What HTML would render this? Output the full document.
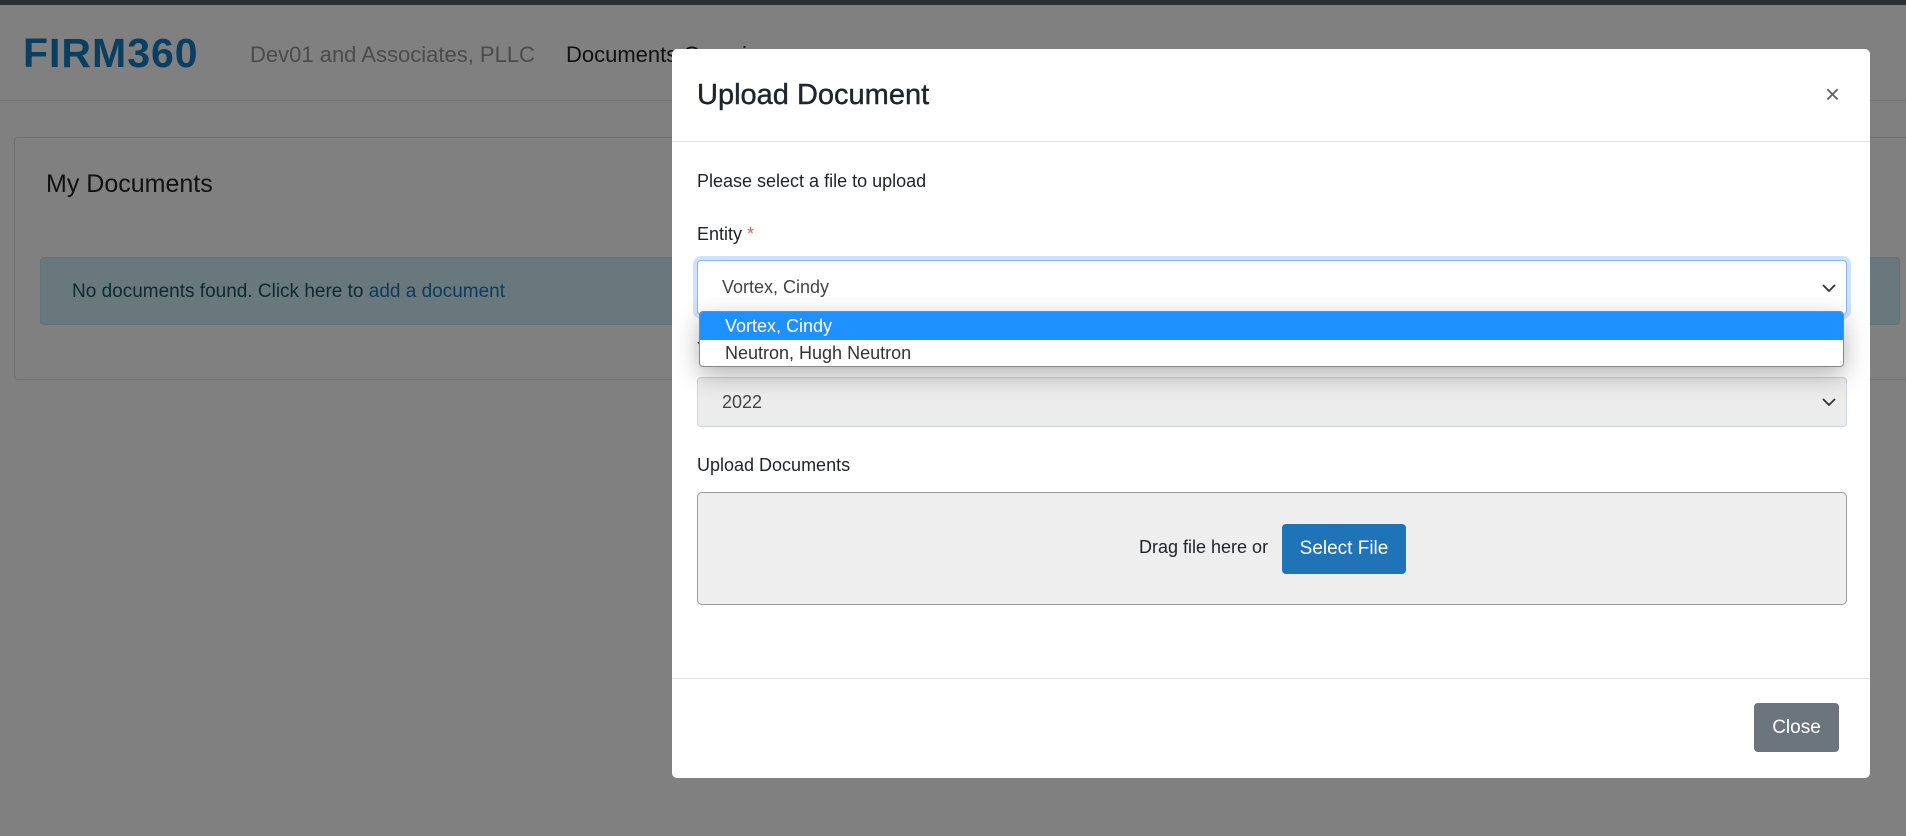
<!DOCTYPE html>
<html><head><meta charset="utf-8"><style>
*{box-sizing:border-box;margin:0;padding:0}
body{width:1906px;height:836px;overflow:hidden;background:#808080;font-family:"Liberation Sans",sans-serif;position:relative;color:#212529}
.abs{position:absolute}
.topbar{left:0;top:0;width:1906px;height:5px;background:#2e2f33}
.nav{left:0;top:5px;width:1906px;height:96px;border-bottom:1px solid #727272}
.logo{left:23px;top:33px;font-size:41px;font-weight:bold;color:#0a3f62;letter-spacing:1px;line-height:40px}
.firm{left:250px;top:42px;font-size:22px;color:#4b4b4b}
.docs{left:566px;top:42px;font-size:22px;color:#111}
.card{left:14px;top:137px;width:1900px;height:243px;border:1px solid #727272;border-radius:4px}
.mydoc{left:46px;top:170px;font-size:25px;color:#111}
.alert{left:40px;top:257px;width:1860px;height:68px;background:#68787c;border:1px solid #62727a;border-radius:4px}
.alert span{position:absolute;left:31px;top:23px;font-size:19px;color:#0e2a30}
.alert a{color:#0f3a5e}
.modal{left:672px;top:49px;width:1198px;height:729px;background:#fff;border-radius:5px}
.mh{left:0;top:0;width:1198px;height:93px;border-bottom:1px solid #dee2e6}
.mh h5{position:absolute;left:25px;top:30px;font-size:29px;font-weight:normal;color:#212529;-webkit-text-stroke:0.4px #212529}
.x{right:30px;top:30px;font-size:26px;color:#666}
.t{font-size:18px;color:#212529}
.sel{border:1px solid #ced4da;border-radius:4px;background:#fff}
.chev{position:absolute;right:10px;top:50%;margin-top:-5px}
.btn{border-radius:4px;color:#fff;font-size:19px;text-align:center}
</style></head><body>
<div class="abs topbar"></div>
<div class="abs nav"></div>
<div class="abs logo">FIRM360</div>
<div class="abs firm">Dev01 and Associates, PLLC</div>
<div class="abs docs">Documents Overview</div>
<div class="abs card"></div>
<div class="abs mydoc">My Documents</div>
<div class="abs alert"><span>No documents found. Click here to <a>add a document</a></span></div>

<div class="abs modal">
 <div class="abs mh"><h5>Upload Document</h5><div class="abs x">×</div></div>
 <div class="abs t" style="left:25px;top:122px">Please select a file to upload</div>
 <div class="abs t" style="left:25px;top:175px">Entity <span style="color:#e55">*</span></div>
 <div class="abs sel" style="left:25px;top:211px;width:1150px;height:55px;border-color:#86b7fe;box-shadow:0 0 0 4px rgba(13,110,253,.2)">
  <span class="abs t" style="left:24px;top:16px;color:#444">Vortex, Cindy</span>
  <svg class="chev" width="14" height="10" viewBox="0 0 14 10"><path d="M1 2l6 6 6-6" fill="none" stroke="#333" stroke-width="1.8"/></svg>
 </div>
 <div class="abs t" style="left:25px;top:290px">Year</div>
 <div class="abs sel" style="left:25px;top:328px;width:1150px;height:50px;background:#ececec">
  <span class="abs t" style="left:24px;top:14px;color:#444">2022</span>
  <svg class="chev" width="14" height="10" viewBox="0 0 14 10"><path d="M1 2l6 6 6-6" fill="none" stroke="#333" stroke-width="1.8"/></svg>
 </div>
 <div class="abs t" style="left:25px;top:406px">Upload Documents</div>
 <div class="abs" style="left:25px;top:443px;width:1150px;height:113px;background:#eee;border:1px solid #9a9a9a;border-radius:5px">
  <span class="abs t" style="left:441px;top:44px">Drag file here or</span>
  <div class="abs btn" style="left:584px;top:31px;width:124px;height:50px;background:#1f73b7;line-height:50px">Select File</div>
 </div>
 <div class="abs" style="left:0;top:629px;width:1198px;height:1px;background:#dee2e6"></div>
 <div class="abs btn" style="left:1082px;top:654px;width:85px;height:49px;background:#6c757d;line-height:49px">Close</div>
</div>

<div class="abs" style="left:699px;top:311px;width:1145px;height:56px;background:#fff;border:1px solid #888;border-radius:4px;box-shadow:0 8px 24px rgba(0,0,0,.3);overflow:hidden">
 <div style="height:28px;background:#1e90ff;color:#fff;font-size:18px;line-height:28px;padding-left:25px">Vortex, Cindy</div>
 <div style="height:27px;color:#333;font-size:18px;line-height:26px;padding-left:25px">Neutron, Hugh Neutron</div>
</div>
</body></html>
